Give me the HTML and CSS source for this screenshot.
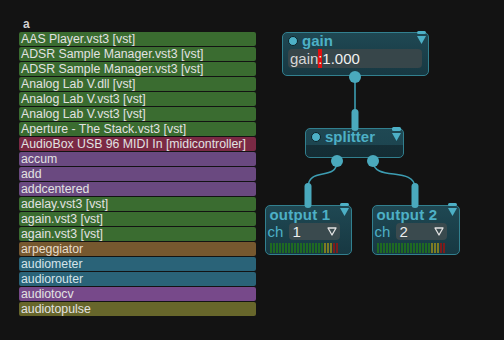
FILE: index.html
```html
<!DOCTYPE html>
<html>
<head>
<meta charset="utf-8">
<link rel="stylesheet" href="styles.css">
</head>
<body>
<div class="app">
  <div class="browser">
    <div class="search">a</div>
    <ul class="list">
      <li class="vst">AAS Player.vst3 [vst]</li>
      <li class="vst">ADSR Sample Manager.vst3 [vst]</li>
      <li class="vst">ADSR Sample Manager.vst3 [vst]</li>
      <li class="vst">Analog Lab V.dll [vst]</li>
      <li class="vst">Analog Lab V.vst3 [vst]</li>
      <li class="vst">Analog Lab V.vst3 [vst]</li>
      <li class="vst">Aperture - The Stack.vst3 [vst]</li>
      <li class="midi">AudioBox USB 96 MIDI In [midicontroller]</li>
      <li class="math">accum</li>
      <li class="math">add</li>
      <li class="math">addcentered</li>
      <li class="vst">adelay.vst3 [vst]</li>
      <li class="vst">again.vst3 [vst]</li>
      <li class="vst">again.vst3 [vst]</li>
      <li class="seq">arpeggiator</li>
      <li class="audio">audiometer</li>
      <li class="audio">audiorouter</li>
      <li class="conv">audiotocv</li>
      <li class="pulse">audiotopulse</li>
    </ul>
  </div>

  <div class="canvas">
    <div class="node gain">
      <div class="head"><span class="dot"></span><span class="title">gain</span></div>
      <div class="menu"><span class="bar"></span><svg width="9" height="8" viewBox="0 0 9 8"><polygon points="0,0 9,0 4.5,8" fill="#4db0c6"/></svg></div>
      <div class="field"><span class="lbl">gain</span><span class="cursor">:</span><span class="val">1.000</span></div>
    </div>

    <div class="node splitter">
      <div class="head"><span class="dot"></span><span class="title">splitter</span></div>
      <div class="menu"><span class="bar"></span><svg width="9" height="8" viewBox="0 0 9 8"><polygon points="0,0 9,0 4.5,8" fill="#4db0c6"/></svg></div>
    </div>

    <div class="node output out1">
      <div class="ohead"><span class="title">output 1</span></div>
      <div class="menu"><span class="bar"></span><svg width="9" height="8" viewBox="0 0 9 8"><polygon points="0,0 9,0 4.5,8" fill="#4db0c6"/></svg></div>
      <div class="chrow">
        <span class="ch">ch</span>
        <div class="select"><span>1</span><svg width="10" height="9" viewBox="0 0 10 9"><polygon points="1,1 9,1 5,8" fill="none" stroke="#e2e2e2" stroke-width="1.3" stroke-linejoin="round"/></svg></div>
      </div>
      <div class="meter">
        <i class="g"></i><i class="g"></i><i class="g"></i><i class="g"></i><i class="g"></i><i class="g"></i><i class="g"></i><i class="g"></i><i class="g"></i><i class="g"></i><i class="g"></i><i class="g"></i><i class="g"></i><i class="g"></i><i class="g"></i><i class="g"></i><i class="g"></i><i class="g"></i><i class="y"></i><i class="y"></i><i class="y"></i><i class="r"></i><i class="r"></i>
      </div>
    </div>

    <div class="node output out2">
      <div class="ohead"><span class="title">output 2</span></div>
      <div class="menu"><span class="bar"></span><svg width="9" height="8" viewBox="0 0 9 8"><polygon points="0,0 9,0 4.5,8" fill="#4db0c6"/></svg></div>
      <div class="chrow">
        <span class="ch">ch</span>
        <div class="select"><span>2</span><svg width="10" height="9" viewBox="0 0 10 9"><polygon points="1,1 9,1 5,8" fill="none" stroke="#e2e2e2" stroke-width="1.3" stroke-linejoin="round"/></svg></div>
      </div>
      <div class="meter">
        <i class="g"></i><i class="g"></i><i class="g"></i><i class="g"></i><i class="g"></i><i class="g"></i><i class="g"></i><i class="g"></i><i class="g"></i><i class="g"></i><i class="g"></i><i class="g"></i><i class="g"></i><i class="g"></i><i class="g"></i><i class="g"></i><i class="g"></i><i class="g"></i><i class="y"></i><i class="y"></i><i class="y"></i><i class="r"></i><i class="r"></i>
      </div>
    </div>

    <svg class="wires" width="504" height="340" viewBox="0 0 504 340">
      <g stroke="#3d9db2" stroke-width="1.6" fill="none">
        <line x1="355" y1="77" x2="355" y2="112"/>
        <path d="M337,161 C337,182 308,166 308,188"/>
        <path d="M373,161 C373,182 415,166 415,188"/>
      </g>
      <g fill="#4aa9bd">
        <circle cx="355" cy="77" r="6"/>
        <rect x="351.5" y="109" width="7" height="22" rx="3.5"/>
        <circle cx="337" cy="161" r="6"/>
        <circle cx="373" cy="161" r="6"/>
        <rect x="304.5" y="183" width="7" height="25" rx="3.5"/>
        <rect x="411.5" y="183" width="7" height="25" rx="3.5"/>
      </g>
    </svg>
  </div>
</div>
</body>
</html>
```

FILE: styles.css
```css
html, body {
  margin: 0;
  padding: 0;
  background: #131313;
  width: 504px;
  height: 340px;
  overflow: hidden;
  font-family: "Liberation Sans", Arial, sans-serif;
}

.app {
  position: relative;
  width: 504px;
  height: 340px;
}

.browser {
  padding: 17px 0 0 19px;
  width: 237px;
}

.search {
  height: 15px;
  line-height: 15px;
  font-size: 12px;
  font-weight: bold;
  color: #d0d0d0;
  padding-left: 4px;
}

.list {
  list-style: none;
  margin: 0;
  padding: 0;
}

.list li {
  height: 14px;
  line-height: 15px;
  margin-bottom: 1px;
  border-radius: 2px;
  padding-left: 2px;
  font-size: 12.3px;
  color: #e2e2e2;
  white-space: nowrap;
  overflow: hidden;
}

.list .vst { background: #3a6c30; }
.list .midi { background: #7b2944; }
.list .math { background: #6a4980; }
.list .seq { background: #76582f; color: #e6dccb; }
.list .audio { background: #2a6378; color: #d4e4ea; }
.list .conv { background: #77498a; }
.list .pulse { background: #67662b; }

.canvas {
  position: absolute;
  left: 0;
  top: 0;
  width: 504px;
  height: 340px;
}

.wires {
  position: absolute;
  left: 0;
  top: 0;
}

.node {
  position: absolute;
  box-sizing: border-box;
  border: 1.5px solid #32808f;
  border-radius: 5px;
  background: linear-gradient(#1f4853, #173842);
}

.gain { left: 282px; top: 32px; width: 147px; height: 44px; }
.splitter {
  left: 305px; top: 128px; width: 99px; height: 30px;
  background: linear-gradient(#1f4853 0, #1d4550 16px, #152f37 16px, #142c34 100%);
}
.out1 { left: 265px; top: 205px; width: 87px; height: 50px; }
.out2 { left: 372px; top: 205px; width: 88px; height: 50px; }

.head {
  display: flex;
  align-items: center;
  height: 16px;
  padding-left: 5px;
  gap: 4px;
}

.dot {
  width: 8px;
  height: 8px;
  border-radius: 50%;
  background: #4db0c6;
  border: 1.5px solid #0c2228;
  flex: none;
}

.title {
  font-size: 15px;
  font-weight: bold;
  color: #4db0c6;
  line-height: 16px;
}

.menu {
  position: absolute;
  right: 2.5px;
  top: -2.5px;
  width: 9px;
  display: flex;
  flex-direction: column;
  gap: 2px;
}
.splitter .menu { top: -2px; }
.output .menu { top: -3.5px; right: 2px; }

.menu .bar {
  display: block;
  height: 3.5px;
  border-radius: 1.5px;
  background: #4db0c6;
}
.menu svg { display: block; }

.field {
  margin: 0 6px 0 5px;
  height: 19px;
  line-height: 19px;
  background: #37464a;
  border-radius: 4px;
  padding-left: 2px;
  font-size: 15px;
  color: #d6d6d6;
}
.field .cursor {
  background: #e01010;
  color: #f0f0f0;
  display: inline-block;
  width: 4px;
  text-align: center;
}
.field .val { color: #f0f0f0; }

.ohead {
  height: 15px;
  padding-left: 3.5px;
}
.ohead .title { line-height: 10px; letter-spacing: 0.2px; }

.chrow {
  display: flex;
  align-items: center;
  margin-top: 1.5px;
  padding-left: 1.5px;
  height: 17px;
}
.ch {
  font-size: 15px;
  color: #4db0c6;
  width: 21px;
}
.select {
  width: 51px;
  height: 17px;
  box-sizing: border-box;
  background: #3a4a4e;
  border-radius: 4px;
  display: flex;
  align-items: center;
  justify-content: space-between;
  padding: 0 3px 0 4px;
  font-size: 15px;
  color: #eeeeee;
}
.select svg { display: block; }

.meter {
  display: flex;
  gap: 1px;
  margin: 3px 0 0 3.5px;
  height: 10px;
}
.meter i {
  display: block;
  width: 2px;
  height: 10px;
}
.meter .g { background: #1f6a22; }
.meter .y { background: #7c7c22; }
.meter .r { background: #7c1c1c; }
```
